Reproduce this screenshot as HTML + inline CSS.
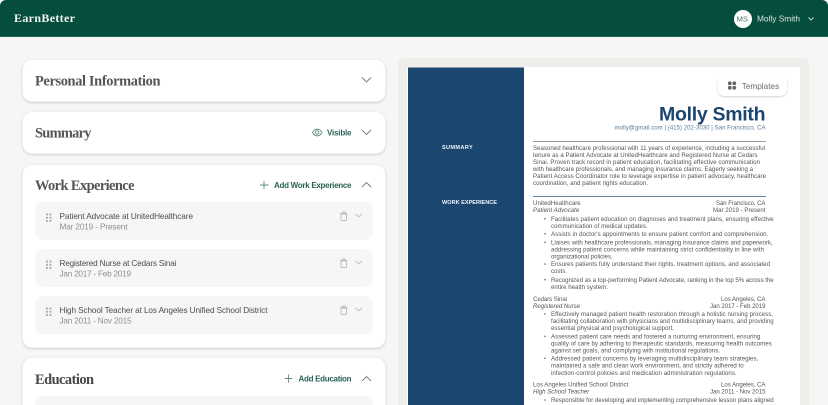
<!DOCTYPE html>
<html lang="en"><head><meta charset="utf-8"><title>EarnBetter</title>
<style>
html,body{margin:0;padding:0;width:828px;height:405px;overflow:hidden;background:#fff}
#page{position:absolute;left:0;top:0;width:828px;height:405px;overflow:hidden;background:#f6f6f6;border-radius:6px 6px 0 0}
#page div{position:absolute;box-sizing:border-box}
.hdr{left:0;top:0;width:828px;height:36.5px;background:#054d3c;border-bottom:1px solid #1f6656}
.card{left:22px;width:364px;background:#fff;border-radius:10px;border:1px solid #f0f0f0;box-shadow:0 1px 2px rgba(0,0,0,.14)}
.item{left:35px;width:338px;height:38px;background:#f6f6f6;border-radius:8px}
svg{position:absolute;left:0;top:0}
text{font-family:"Liberation Sans",sans-serif}
.s{font-family:"Liberation Serif",serif;font-weight:700}
.r{font-size:6.1px;fill:#555}
.i{font-style:italic}
.t{font-size:14.4px;fill:#555}
.a{font-size:8px;font-weight:700;fill:#2a6257}
.h{font-size:8.2px;fill:#4d4d4d}
.d{font-size:8.2px;fill:#8e8e8e}
.w{font-size:5.6px;font-weight:700;fill:#eef3f7}
</style></head><body>
<div id="page">
<div class="hdr"></div>
<div style="left:398px;top:58px;width:411px;height:347px;background:#eeede9;border-radius:6px 6px 0 0"></div>
<div style="left:407px;top:66.5px;width:393px;height:338.5px;background:#fff"></div>
<div style="left:407.5px;top:66.5px;width:116px;height:338.5px;background:#1b4670;border-top:1px solid #8d9cab"></div>
<div style="left:718px;top:75px;width:69px;height:21px;background:#fff;border-radius:7px;box-shadow:0 1px 2px rgba(0,0,0,.18)"></div>
<div style="left:533px;top:141px;width:232.5px;height:1px;background:#9b9b9b"></div>
<div style="left:533px;top:196px;width:232.5px;height:1px;background:#5f86a8"></div>
<div class="card" style="top:59px;height:43px"></div>
<div class="card" style="top:111px;height:43px"></div>
<div class="card" style="top:164px;height:184px"></div>
<div class="card" style="top:357px;height:48px;border-bottom:0;border-radius:10px 10px 0 0"></div>
<div class="item" style="top:202px"></div>
<div class="item" style="top:249px"></div>
<div class="item" style="top:296px"></div>
<div class="item" style="top:396px;height:9px;border-radius:8px 8px 0 0"></div>
<div style="left:733.5px;top:9.5px;width:18px;height:18px;border-radius:50%;background:#fff"></div>

<svg width="828" height="405" viewBox="0 0 828 405" style="filter:blur(.25px)">
<text class="s" x="14" y="22" font-size="12" fill="#f2f5f3" textLength="61">EarnBetter</text>
<text x="736.5" y="21.5" font-size="7.6" fill="#4a7069" textLength="11.5">MS</text>
<text x="757" y="21.5" font-size="8.3" fill="#dbe5e2" textLength="43">Molly Smith</text>
<path d="M808.5 17.5l2.500 2.500 2.500-2.500" fill="none" stroke="#d5e0dc" stroke-width=".9"/>

<text class="s t" x="35" y="85.500" textLength="125.500">Personal Information</text>
<text class="s t" x="35" y="137.500" textLength="56.500">Summary</text>
<text class="s t" x="35" y="190" textLength="99.500">Work Experience</text>
<text class="s t" x="35" y="384" textLength="59" style="fill:#484848">Education</text>

<g fill="none" stroke="#777" stroke-width=".9">
<path d="M362 77.500l4.500 4.500 4.500-4.500"/>
<path d="M362 130l4.500 4.500 4.500-4.500"/>
<path d="M362 187l4.500-4.500 4.500 4.500"/>
<path d="M362 381l4.500-4.500 4.500 4.500"/>
</g>
<g fill="none" stroke="#5f8a84" stroke-width=".9">
<path d="M312.500 132.500c2.500-4.500 7-4.500 9.500 0c-2.500 4.500-7 4.500-9.500 0z"/>
<circle cx="317.200" cy="132.500" r="1.700"/>
<path d="M264 181v8M260 185h8.500"/>
<path d="M288.500 374.500v8M284.800 378.500h7.500"/>
</g>
<text class="a" x="327" y="135.500" textLength="24.500">Visible</text>
<text class="a" x="274" y="188" textLength="77.500">Add Work Experience</text>
<text class="a" x="298.500" y="381.500" textLength="53">Add Education</text>

<text class="h" x="59.500" y="219" textLength="133.500">Patient Advocate at UnitedHealthcare</text>
<text class="d" x="59.500" y="229.500" textLength="68">Mar 2019 - Present</text>
<text class="h" x="59.500" y="266" textLength="117">Registered Nurse at Cedars Sinai</text>
<text class="d" x="59.500" y="276.500" textLength="71.500">Jan 2017 - Feb 2019</text>
<text class="h" x="59.500" y="313" textLength="208">High School Teacher at Los Angeles Unified School District</text>
<text class="d" x="59.500" y="323.500" textLength="72">Jan 2011 - Nov 2015</text>

<g fill="#a8a8a8">
<g><rect x="46" y="213.500" width="1.900" height="1.900"/><rect x="49.500" y="213.500" width="1.900" height="1.900"/><rect x="46" y="216.800" width="1.900" height="1.900"/><rect x="49.500" y="216.800" width="1.900" height="1.900"/><rect x="46" y="220" width="1.900" height="1.900"/><rect x="49.500" y="220" width="1.900" height="1.900"/></g>
<g transform="translate(0,47)"><rect x="46" y="213.500" width="1.900" height="1.900"/><rect x="49.500" y="213.500" width="1.900" height="1.900"/><rect x="46" y="216.800" width="1.900" height="1.900"/><rect x="49.500" y="216.800" width="1.900" height="1.900"/><rect x="46" y="220" width="1.900" height="1.900"/><rect x="49.500" y="220" width="1.900" height="1.900"/></g>
<g transform="translate(0,94)"><rect x="46" y="213.500" width="1.900" height="1.900"/><rect x="49.500" y="213.500" width="1.900" height="1.900"/><rect x="46" y="216.800" width="1.900" height="1.900"/><rect x="49.500" y="216.800" width="1.900" height="1.900"/><rect x="46" y="220" width="1.900" height="1.900"/><rect x="49.500" y="220" width="1.900" height="1.900"/></g>
</g>
<g fill="none" stroke="#bcbcbc" stroke-width=".9">
<path d="M341 214h5.500v5.500a1 1 0 0 1-1 1h-3.500a1 1 0 0 1-1-1zM340 213.500h7.500M342.500 213v-1h2.500v1"/>
<path d="M355.500 214l3.200 2.800 3.200-2.800"/>
<g transform="translate(0,47)"><path d="M341 214h5.500v5.500a1 1 0 0 1-1 1h-3.500a1 1 0 0 1-1-1zM340 213.500h7.500M342.500 213v-1h2.500v1"/><path d="M355.500 214l3.200 2.800 3.200-2.800"/></g>
<g transform="translate(0,94)"><path d="M341 214h5.500v5.500a1 1 0 0 1-1 1h-3.500a1 1 0 0 1-1-1zM340 213.500h7.500M342.500 213v-1h2.500v1"/><path d="M355.500 214l3.200 2.800 3.200-2.800"/></g>
</g>

<g fill="#666"><rect x="728" y="81.500" width="3.600" height="3.600" rx="1.200"/><rect x="732.500" y="81.500" width="3.600" height="3.600" rx="1.200"/><rect x="728" y="86" width="3.600" height="3.600" rx="1.200"/><rect x="732.500" y="86" width="3.600" height="3.600" rx="1.200"/></g>
<text x="741.700" y="88.800" font-size="8.200" fill="#6a6a6a" textLength="37.500">Templates</text>

<text x="659" y="120.500" font-size="19.500" font-weight="700" fill="#1b4670" textLength="106.500">Molly Smith</text>
<text x="614.500" y="129.300" font-size="6" fill="#5b7a96" textLength="151">molly@gmail.com | (415) 202-3030 | San Francisco, CA</text>
<text class="w" x="442" y="149" textLength="30.700">SUMMARY</text>
<text class="w" x="442" y="204" textLength="55">WORK EXPERIENCE</text>

<text class="r" x="533" y="150.200" textLength="232">Seasoned healthcare professional with 11 years of experience, including a successful</text>
<text class="r" x="533" y="157.200" textLength="224.500">tenure as a Patient Advocate at UnitedHealthcare and Registered Nurse at Cedars</text>
<text class="r" x="533" y="164.200" textLength="227">Sinai. Proven track record in patient education, facilitating effective communication</text>
<text class="r" x="533" y="171.200" textLength="220">with healthcare professionals, and managing insurance claims. Eagerly seeking a</text>
<text class="r" x="533" y="178.200" textLength="233">Patient Access Coordinator role to leverage expertise in patient advocacy, healthcare</text>
<text class="r" x="533" y="185.200" textLength="115">coordination, and patient rights education.</text>

<text class="r" x="533" y="205.200" textLength="47.700">UnitedHealthcare</text>
<text class="r" x="716" y="205.200" textLength="49.500">San Francisco, CA</text>
<text class="r i" x="533" y="212.200" textLength="46.300">Patient Advocate</text>
<text class="r" x="713" y="212.200" textLength="52.500">Mar 2019 - Present</text>
<text class="r" x="551" y="220.900" textLength="222.700">Facilitates patient education on diagnoses and treatment plans, ensuring effective</text>
<text class="r" x="551" y="227.900" textLength="96.700">communication of medical updates.</text>
<text class="r" x="551" y="235.900" textLength="217.300">Assists in doctor's appointments to ensure patient comfort and comprehension.</text>
<text class="r" x="551" y="244.500" textLength="221.700">Liaises with healthcare professionals, managing insurance claims and paperwork,</text>
<text class="r" x="551" y="251.500" textLength="213">addressing patient concerns while maintaining strict confidentiality in line with</text>
<text class="r" x="551" y="258.500" textLength="61.700">organizational policies.</text>
<text class="r" x="551" y="266.200" textLength="219">Ensures patients fully understand their rights, treatment options, and associated</text>
<text class="r" x="551" y="273.200" textLength="16">costs.</text>
<text class="r" x="551" y="281.900" textLength="222.700">Recognized as a top-performing Patient Advocate, ranking in the top 5% across the</text>
<text class="r" x="551" y="288.900" textLength="57">entire health system.</text>

<text class="r" x="533" y="300.900" textLength="34">Cedars Sinai</text>
<text class="r" x="721" y="300.900" textLength="44.500">Los Angeles, CA</text>
<text class="r i" x="533" y="307.900" textLength="47">Registered Nurse</text>
<text class="r" x="710" y="307.900" textLength="55.500">Jan 2017 - Feb 2019</text>
<text class="r" x="551" y="316.200" textLength="222">Effectively managed patient health restoration through a holistic nursing process,</text>
<text class="r" x="551" y="323.200" textLength="222.700">facilitating collaboration with physicians and multidisciplinary teams, and providing</text>
<text class="r" x="551" y="330.200" textLength="123">essential physical and psychological support.</text>
<text class="r" x="551" y="338.500" textLength="209.300">Assessed patient care needs and fostered a nurturing environment, ensuring</text>
<text class="r" x="551" y="345.500" textLength="220.700">quality of care by adhering to therapeutic standards, measuring health outcomes</text>
<text class="r" x="551" y="352.500" textLength="169">against set goals, and complying with institutional regulations.</text>
<text class="r" x="551" y="360.500" textLength="207.300">Addressed patient concerns by leveraging multidisciplinary team strategies,</text>
<text class="r" x="551" y="367.500" textLength="192.700">maintained a safe and clean work environment, and strictly adhered to</text>
<text class="r" x="551" y="374.900" textLength="185.700">infection-control policies and medication administration regulations.</text>

<text class="r" x="533" y="386.500" textLength="95.300">Los Angeles Unified School District</text>
<text class="r" x="721" y="386.500" textLength="44.500">Los Angeles, CA</text>
<text class="r i" x="533" y="393.500" textLength="56.300">High School Teacher</text>
<text class="r" x="710" y="393.500" textLength="55.500">Jan 2011 - Nov 2015</text>
<text class="r" x="551" y="402.200" textLength="222.700">Responsible for developing and implementing comprehensive lesson plans aligned</text>

<g fill="#666">
<circle cx="545" cy="218.700" r=".8"/><circle cx="545" cy="233.700" r=".8"/><circle cx="545" cy="242.300" r=".8"/><circle cx="545" cy="264" r=".8"/><circle cx="545" cy="279.700" r=".8"/>
<circle cx="545" cy="314" r=".8"/><circle cx="545" cy="336.300" r=".8"/><circle cx="545" cy="358.300" r=".8"/><circle cx="545" cy="400" r=".8"/>
</g>
</svg>
</div>
</body></html>
